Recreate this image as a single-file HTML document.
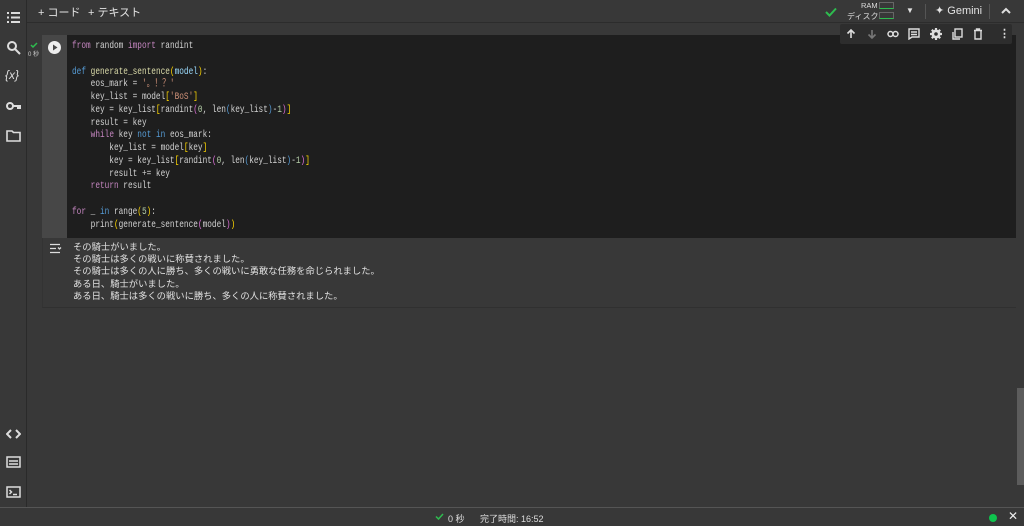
<!DOCTYPE html>
<html><head><meta charset="utf-8"><style>
*{margin:0;padding:0;box-sizing:border-box}
body{width:1024px;height:526px;background:#383838;overflow:hidden;position:relative;font-family:"Liberation Sans","Noto Sans CJK JP",sans-serif;color:#e3e3e3}
.side{position:absolute;left:0;top:0;width:27px;height:507px;border-right:1px solid #2a2a2a;background:#383838}
.side svg{position:absolute;left:6px}
.top{position:absolute;left:27px;top:0;right:0;height:23px;border-bottom:1px solid #2c2c2c;background:#383838}
.top .b{position:absolute;top:4px;font-size:11px;color:#e3e3e3}
.cell{position:absolute;left:42px;top:35px;width:974px;height:203px;background:#1e1e1e}
.gut{position:absolute;left:42px;top:35px;width:25px;height:203px;background:#474747}
pre{position:absolute;left:72px;top:40px;font-family:"Liberation Mono",monospace;font-size:10.5px;line-height:12.75px;color:#d4d4d4;transform:scaleX(0.74);transform-origin:0 0}
.k{color:#c586c0}.d{color:#569cd6}.f{color:#dcdcaa}.s{color:#ce9178}.n{color:#b5cea8}.y{color:#ffd700}.p{color:#da70d6}.v{color:#9cdcfe}
.out{position:absolute;left:42px;top:238px;width:974px;height:70px;background:#383838;border-bottom:1px solid #303030;border-left:1px solid #333}
.out div.t{position:absolute;left:30px;top:3px;font-size:9.3px;line-height:12.2px;color:#e0e0e0;white-space:nowrap}
.tb{position:absolute;left:840px;top:24px;width:172px;height:20px;background:#2d2d2d;border-radius:2px}
.bot{position:absolute;left:0;top:507px;width:1024px;height:19px;border-top:1px solid #555;background:#383838;font-size:9px;color:#ddd}
.scroll{position:absolute;left:1017px;top:388px;width:7px;height:97px;background:#5c5c5c}
</style></head><body>
<div class="side">
<svg style="top:10px" width="15" height="15" viewBox="0 0 15 15" fill="#ddd"><rect x="1" y="2" width="2" height="2"/><rect x="5" y="2" width="9" height="2"/><rect x="1" y="6.5" width="2" height="2"/><rect x="5" y="6.5" width="9" height="2"/><rect x="1" y="11" width="2" height="2"/><rect x="5" y="11" width="9" height="2"/></svg>
<svg style="top:40px" width="15" height="15" viewBox="0 0 15 15" fill="none" stroke="#ddd" stroke-width="2"><circle cx="6" cy="6" r="4"/><path d="M9 9l5 5"/></svg>
<div style="position:absolute;left:5px;top:68px;font-size:12px;color:#ddd;font-style:italic">{<i>x</i>}</div>
<svg style="top:100px" width="16" height="12" viewBox="0 0 16 12" fill="none" stroke="#ddd" stroke-width="2"><circle cx="4" cy="6" r="3"/><path d="M7 6h8M12 6v3M14 6v3"/></svg>
<svg style="top:129px" width="15" height="13" viewBox="0 0 15 13" fill="none" stroke="#ddd" stroke-width="1.6"><path d="M1 2h5l1.5 1.5H14V12H1z"/></svg>
<svg style="top:428px" width="15" height="12" viewBox="0 0 15 12" fill="none" stroke="#ddd" stroke-width="2"><path d="M5 2L1 6l4 4M10 2l4 4-4 4"/></svg>
<svg style="top:456px" width="15" height="12" viewBox="0 0 15 12" fill="none" stroke="#ddd" stroke-width="1.5"><rect x="1" y="1" width="13" height="10"/><path d="M3 5h9M3 8h9"/></svg>
<svg style="top:486px" width="15" height="12" viewBox="0 0 15 12" fill="none" stroke="#ddd" stroke-width="1.5"><rect x="1" y="1" width="13" height="10"/><path d="M3.5 4l2 2-2 2M7 8.5h4"/></svg>
</div>
<div class="top">
<div class="b" style="left:11px">+ コード</div>
<div class="b" style="left:61px">+ テキスト</div>
<svg style="position:absolute;left:798px;top:7px" width="12" height="10" viewBox="0 0 12 10" fill="none" stroke="#2ebc4f" stroke-width="2"><path d="M1 5l3.5 3.5L11 1.5"/></svg>
<div style="position:absolute;left:834px;top:1px;font-size:7.5px;color:#ddd">RAM</div>
<div style="position:absolute;left:820px;top:11px;font-size:8px;color:#ddd">ディスク</div>
<div style="position:absolute;left:852px;top:2px;width:15px;height:7px;border:1px solid #666;border-bottom:1px solid #2ebc4f"></div>
<div style="position:absolute;left:852px;top:12px;width:15px;height:7px;border:1px solid #666;border-bottom:1px solid #2ebc4f"></div>
<div style="position:absolute;left:879px;top:6px;font-size:8px">▼</div>
<div style="position:absolute;left:898px;top:4px;width:1px;height:15px;background:#555"></div>
<div style="position:absolute;left:908px;top:4px;font-size:11px">✦ Gemini</div>
<div style="position:absolute;left:962px;top:4px;width:1px;height:15px;background:#555"></div>
<svg style="position:absolute;left:974px;top:7px" width="10" height="7" viewBox="0 0 10 7" fill="none" stroke="#ddd" stroke-width="2"><path d="M1 6l4-4 4 4"/></svg>
</div>
<div class="cell"></div><div class="gut"></div>
<svg style="position:absolute;left:30px;top:42px" width="8" height="6" viewBox="0 0 8 6" fill="none" stroke="#2ebc4f" stroke-width="1.5"><path d="M1 3l2 2 4-4"/></svg>
<div style="position:absolute;left:28px;top:49px;font-size:6px;color:#ccc">0 秒</div>
<svg style="position:absolute;left:47px;top:40px" width="15" height="15" viewBox="0 0 15 15"><circle cx="7.5" cy="7.5" r="6.5" fill="#eee"/><path d="M6 4.5v6l4.5-3z" fill="#474747"/></svg>
<pre><span class="k">from</span> random <span class="k">import</span> randint

<span class="d">def</span> <span class="f">generate_sentence</span><span class="y">(</span><span class="v">model</span><span class="y">)</span>:
    eos_mark = <span class="s">'。！？'</span>
    key_list = model<span class="y">[</span><span class="s">'BoS'</span><span class="y">]</span>
    key = key_list<span class="y">[</span>randint<span class="p">(</span><span class="n">0</span>, len<span class="d">(</span>key_list<span class="d">)</span>-<span class="n">1</span><span class="p">)</span><span class="y">]</span>
    result = key
    <span class="k">while</span> key <span class="d">not</span> <span class="d">in</span> eos_mark:
        key_list = model<span class="y">[</span>key<span class="y">]</span>
        key = key_list<span class="y">[</span>randint<span class="p">(</span><span class="n">0</span>, len<span class="d">(</span>key_list<span class="d">)</span>-<span class="n">1</span><span class="p">)</span><span class="y">]</span>
        result += key
    <span class="k">return</span> result

<span class="k">for</span> _ <span class="d">in</span> range<span class="y">(</span><span class="n">5</span><span class="y">)</span>:
    print<span class="y">(</span>generate_sentence<span class="p">(</span>model<span class="p">)</span><span class="y">)</span></pre>
<div class="tb">
<svg style="position:absolute;left:6px;top:5px" width="10" height="10" viewBox="0 0 10 10" fill="none" stroke="#ddd" stroke-width="1.6"><path d="M5 9V1M1.5 4.5L5 1l3.5 3.5"/></svg>
<svg style="position:absolute;left:27px;top:5px" width="10" height="10" viewBox="0 0 10 10" fill="none" stroke="#777" stroke-width="1.6"><path d="M5 1v8M1.5 5.5L5 9l3.5-3.5"/></svg>
<svg style="position:absolute;left:47px;top:6px" width="12" height="8" viewBox="0 0 12 8" fill="none" stroke="#ddd" stroke-width="1.5"><rect x="1" y="1.5" width="5" height="5" rx="2.5"/><rect x="6" y="1.5" width="5" height="5" rx="2.5"/></svg>
<svg style="position:absolute;left:68px;top:4px" width="12" height="12" viewBox="0 0 12 12" fill="none" stroke="#ddd" stroke-width="1.4"><path d="M1 1h10v8H4l-3 2z"/><path d="M3 4h6M3 6.5h6"/></svg>
<svg style="position:absolute;left:90px;top:4px" width="12" height="12" viewBox="0 0 12 12"><circle cx="6" cy="6" r="4.5" fill="#ddd"/><g stroke="#ddd" stroke-width="2.2"><path d="M6 0v12M0 6h12M1.8 1.8l8.4 8.4M10.2 1.8l-8.4 8.4"/></g><circle cx="6" cy="6" r="1.8" fill="#2d2d2d"/></svg>
<svg style="position:absolute;left:111px;top:4px" width="12" height="12" viewBox="0 0 12 12" fill="none" stroke="#ddd" stroke-width="1.4"><rect x="4" y="1" width="7" height="8"/><path d="M2 4v7h7"/></svg>
<svg style="position:absolute;left:133px;top:4px" width="10" height="12" viewBox="0 0 10 12" fill="none" stroke="#ddd" stroke-width="1.4"><path d="M1 2.5h8M3.5 2.5V1h3v1.5M2 3v8h6V3"/></svg>
<div style="position:absolute;left:159px;top:3px;font-size:11px;color:#ddd;font-weight:bold">⋮</div>
</div>
<div class="out">
<svg style="position:absolute;left:6px;top:5px" width="13" height="11" viewBox="0 0 13 11" fill="none" stroke="#ddd" stroke-width="1.3"><path d="M1 1.5h10M1 9.5h10M1 5.5h6"/><path d="M9 4.5l1.5 1.5 1.5-1.5" /></svg>
<div class="t">その騎士がいました。<br>その騎士は多くの戦いに称賛されました。<br>その騎士は多くの人に勝ち、多くの戦いに勇敢な任務を命じられました。<br>ある日、騎士がいました。<br>ある日、騎士は多くの戦いに勝ち、多くの人に称賛されました。</div>
</div>
<div class="scroll"></div>
<div class="bot">
<svg style="position:absolute;left:435px;top:5px" width="9" height="7" viewBox="0 0 9 7" fill="none" stroke="#2ebc4f" stroke-width="1.5"><path d="M1 3.5l2.5 2.5L8 1"/></svg>
<span style="position:absolute;left:448px;top:4px">0 秒</span>
<span style="position:absolute;left:480px;top:4px">完了時間: 16:52</span>
<div style="position:absolute;left:989px;top:6px;width:8px;height:8px;border-radius:50%;background:#0ec34d"></div>
<span style="position:absolute;left:1008px;top:1px;font-size:12px;color:#eee">✕</span>
</div>
</body></html>
